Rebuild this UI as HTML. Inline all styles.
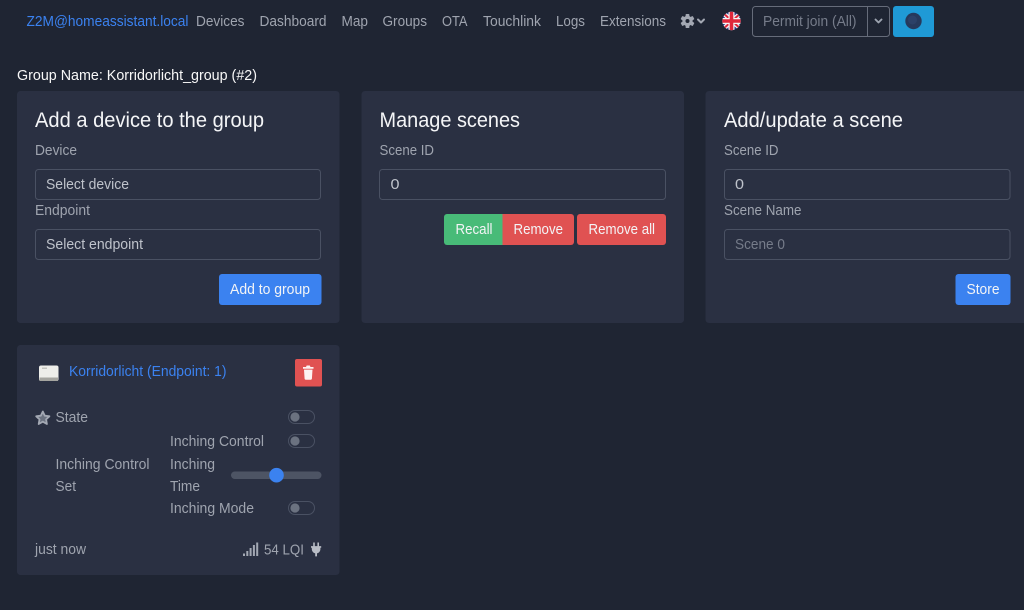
<!DOCTYPE html>
<html lang="en"><head><meta charset="utf-8"><title>Z2M Group</title>
<style>
html,body{margin:0;padding:0;background:#1f2533;width:1024px;height:610px;overflow:hidden}
svg{display:block}
text{font-family:"Liberation Sans",Arial,sans-serif;font-size:14.8px;fill:#9fa4af}
.h{font-size:21px;fill:#f4f5f7}
.w{fill:#f3f4f6}
.l{fill:#3b82f0}
.v{fill:#bfc3cb}
.p{fill:#767c8a}
.input{fill:#2a3042;stroke:#4a5163;stroke-width:1}
.card{fill:#2a3042}
.tg{fill:none;stroke:#4a5163;stroke-width:1}
.kn{fill:#6b7280}
</style></head><body>
<svg width="1024" height="610" viewBox="0 0 1024 610" xmlns="http://www.w3.org/2000/svg">
<defs><clipPath id="fc"><circle cx="731.5" cy="21" r="9.2"/></clipPath></defs>
<rect width="1024" height="610" fill="#1f2533"/>

<!-- navbar -->
<text x="26.5" y="26" textLength="162" lengthAdjust="spacingAndGlyphs" class="l">Z2M@homeassistant.local</text>
<text x="196" y="26" textLength="48.5" lengthAdjust="spacingAndGlyphs">Devices</text>
<text x="259.5" y="26" textLength="67" lengthAdjust="spacingAndGlyphs">Dashboard</text>
<text x="341.5" y="26" textLength="26.5" lengthAdjust="spacingAndGlyphs">Map</text>
<text x="382.5" y="26" textLength="44.5" lengthAdjust="spacingAndGlyphs">Groups</text>
<text x="442" y="26" textLength="25.5" lengthAdjust="spacingAndGlyphs">OTA</text>
<text x="483" y="26" textLength="58" lengthAdjust="spacingAndGlyphs">Touchlink</text>
<text x="556" y="26" textLength="29" lengthAdjust="spacingAndGlyphs">Logs</text>
<text x="600" y="26" textLength="66" lengthAdjust="spacingAndGlyphs">Extensions</text>

<!-- gear -->
<g transform="translate(687.5 21)">
<g fill="#a3a8b3">
<circle r="5.2"/>
<rect x="-1.9" y="-7" width="3.8" height="14" rx=".8"/>
<rect x="-1.9" y="-7" width="3.8" height="14" rx=".8" transform="rotate(60)"/>
<rect x="-1.9" y="-7" width="3.8" height="14" rx=".8" transform="rotate(120)"/>
</g>
<circle r="2" fill="#1f2533"/>
</g>
<path d="M698 19.5l3 3 3-3" fill="none" stroke="#a3a8b3" stroke-width="2" stroke-linecap="round" stroke-linejoin="round"/>

<!-- flag -->
<g clip-path="url(#fc)">
<rect x="722" y="11" width="20" height="20" fill="#2a3a8c"/>
<path d="M722 12l20 18M742 12l-20 18" stroke="#f5f5f5" stroke-width="4.5"/>
<path d="M722 12l20 18M742 12l-20 18" stroke="#e0283c" stroke-width="2"/>
<path d="M731.5 11v20M722 21h20" stroke="#f5f5f5" stroke-width="6"/>
<path d="M731.5 11v20M722 21h20" stroke="#e0283c" stroke-width="3.6"/>
</g>

<!-- permit join -->
<rect x="752.5" y="6.5" width="137" height="30" rx="3" fill="none" stroke="#666c7a"/>
<line x1="867.5" y1="6.5" x2="867.5" y2="36.5" stroke="#666c7a"/>
<text x="763" y="26" textLength="93.5" lengthAdjust="spacingAndGlyphs" style="fill:#767c8a">Permit join (All)</text>
<path d="M875.5 19.5l3 3 3-3" fill="none" stroke="#9ca3af" stroke-width="1.9" stroke-linecap="round" stroke-linejoin="round"/>
<rect x="893" y="6" width="41" height="31" rx="3" fill="#1f9ad6"/>
<circle cx="913.5" cy="21" r="8.2" fill="#26395c"/>
<circle cx="912.5" cy="20" r="4.5" fill="#2c4168"/>

<!-- group name -->
<text x="17" y="80" textLength="240" lengthAdjust="spacingAndGlyphs" style="fill:#f8f8f8;font-size:14.4px">Group Name: Korridorlicht_group (#2)</text>

<!-- cards -->
<rect class="card" x="17" y="91" width="322.5" height="232" rx="3.5"/>
<rect class="card" x="361.5" y="91" width="322.5" height="232" rx="3.5"/>
<rect class="card" x="705.5" y="91" width="330" height="232" rx="3.5"/>
<rect class="card" x="17" y="345" width="322.5" height="230" rx="3.5"/>

<!-- card 1 -->
<text x="35" y="127" textLength="229" lengthAdjust="spacingAndGlyphs" class="h">Add a device to the group</text>
<text x="35" y="155" textLength="42" lengthAdjust="spacingAndGlyphs">Device</text>
<rect class="input" x="35.5" y="169.5" width="285" height="30" rx="3"/>
<text x="46" y="189" textLength="83" lengthAdjust="spacingAndGlyphs" class="v">Select device</text>
<text x="35" y="215" textLength="55" lengthAdjust="spacingAndGlyphs">Endpoint</text>
<rect class="input" x="35.5" y="229.5" width="285" height="30" rx="3"/>
<text x="46" y="249" textLength="97" lengthAdjust="spacingAndGlyphs" class="v">Select endpoint</text>
<rect x="219" y="274" width="102.5" height="31" rx="3" fill="#3b82f0"/>
<text x="230" y="294" textLength="80" lengthAdjust="spacingAndGlyphs" class="w">Add to group</text>

<!-- card 2 -->
<text x="379.5" y="127" textLength="140.5" lengthAdjust="spacingAndGlyphs" class="h">Manage scenes</text>
<text x="379.5" y="155" textLength="54.5" lengthAdjust="spacingAndGlyphs">Scene ID</text>
<rect class="input" x="379.5" y="169.5" width="286" height="30" rx="3"/>
<text x="390.5" y="189" textLength="9" lengthAdjust="spacingAndGlyphs" class="v">0</text>
<path d="M447 214h55.5v31H447a3 3 0 0 1-3-3v-25a3 3 0 0 1 3-3z" fill="#48bb78"/>
<path d="M502.5 214H571a3 3 0 0 1 3 3v25a3 3 0 0 1-3 3h-68.5z" fill="#e05252"/>
<rect x="577" y="214" width="89" height="31" rx="3" fill="#e05252"/>
<text x="455.5" y="234" textLength="37" lengthAdjust="spacingAndGlyphs" class="w">Recall</text>
<text x="513.5" y="234" textLength="49.5" lengthAdjust="spacingAndGlyphs" class="w">Remove</text>
<text x="588.5" y="234" textLength="66.5" lengthAdjust="spacingAndGlyphs" class="w">Remove all</text>

<!-- card 3 -->
<text x="724" y="127" textLength="179" lengthAdjust="spacingAndGlyphs" class="h">Add/update a scene</text>
<text x="724" y="155" textLength="54.5" lengthAdjust="spacingAndGlyphs">Scene ID</text>
<rect class="input" x="724.5" y="169.5" width="285.5" height="30" rx="3"/>
<text x="735" y="189" textLength="9" lengthAdjust="spacingAndGlyphs" class="v">0</text>
<text x="724" y="215" textLength="77.5" lengthAdjust="spacingAndGlyphs">Scene Name</text>
<rect class="input" x="724.5" y="229.5" width="285.5" height="30" rx="3"/>
<text x="735" y="249" textLength="50" lengthAdjust="spacingAndGlyphs" class="p">Scene 0</text>
<rect x="955.5" y="274" width="55" height="31" rx="3" fill="#3b82f0"/>
<text x="966.5" y="294" textLength="33" lengthAdjust="spacingAndGlyphs" class="w">Store</text>

<!-- card 4 -->
<rect x="39" y="365.5" width="19.5" height="15.5" rx="2" fill="#eeeeea"/>
<rect x="39.5" y="377.5" width="18.5" height="3.5" fill="#a5a5a0"/>
<rect x="42" y="367.5" width="5" height="1.5" fill="#c5c5c0"/>
<text x="69" y="376" textLength="157.5" lengthAdjust="spacingAndGlyphs" class="l">Korridorlicht (Endpoint: 1)</text>
<rect x="295" y="359" width="27" height="27.5" rx="2" fill="#e05252"/>
<path d="M303 367h10.5v1.8H303z M306 367l.7-1.5h3.1l.7 1.5z M304 369.6h8.5l-.6 9.2a1 1 0 0 1-1 .9h-5.3a1 1 0 0 1-1-.9z" fill="#fdf2f2"/>

<path d="M42.8 411.5l2 4.2 4.6.6-3.3 3.1.8 4.6-4.1-2.3-4.1 2.3.8-4.6-3.3-3.1 4.6-.6z" fill="#6b7280" stroke="#a3a8b3" stroke-width="1.8" stroke-linejoin="round"/>
<text x="55.5" y="422" textLength="32.5" lengthAdjust="spacingAndGlyphs">State</text>

<rect class="tg" x="288.5" y="410.5" width="26" height="13" rx="6.5"/>
<circle class="kn" cx="295" cy="417" r="4.6"/>
<text x="170" y="446" textLength="94" lengthAdjust="spacingAndGlyphs">Inching Control</text>
<rect class="tg" x="288.5" y="434.5" width="26" height="13" rx="6.5"/>
<circle class="kn" cx="295" cy="441" r="4.6"/>

<text x="55.5" y="469" textLength="94" lengthAdjust="spacingAndGlyphs">Inching Control</text>
<text x="55.5" y="491" textLength="20.5" lengthAdjust="spacingAndGlyphs">Set</text>
<text x="170" y="469" textLength="45" lengthAdjust="spacingAndGlyphs">Inching</text>
<text x="170" y="491" textLength="30" lengthAdjust="spacingAndGlyphs">Time</text>
<rect x="231" y="471.5" width="90.5" height="7.5" rx="3.75" fill="#4d5464"/>
<circle cx="276.5" cy="475.2" r="7.3" fill="#3b82f0"/>

<text x="170" y="513" textLength="84" lengthAdjust="spacingAndGlyphs">Inching Mode</text>
<rect class="tg" x="288.5" y="501.5" width="26" height="13" rx="6.5"/>
<circle class="kn" cx="295" cy="508" r="4.6"/>

<text x="35" y="554" textLength="51" lengthAdjust="spacingAndGlyphs">just now</text>
<g fill="#a3a8b3">
<rect x="243" y="553.5" width="2" height="2.5"/>
<rect x="246.3" y="551" width="2" height="5"/>
<rect x="249.6" y="548" width="2" height="8"/>
<rect x="252.9" y="545" width="2" height="11"/>
<rect x="256.2" y="542.5" width="2" height="13.5"/>
</g>
<text x="264" y="554.5" textLength="40" lengthAdjust="spacingAndGlyphs">54 LQI</text>
<path d="M313.2 542.5h1.6v3.6h2.6v-3.6h1.6v3.6h2.2v1.6h-.8v1.5a4.3 4.3 0 0 1-3.4 4.2v3h-1.8v-3a4.3 4.3 0 0 1-3.4-4.2v-1.5h-.8v-1.6h2.2z" fill="#b8bcc5"/>
</svg>
</body></html>
